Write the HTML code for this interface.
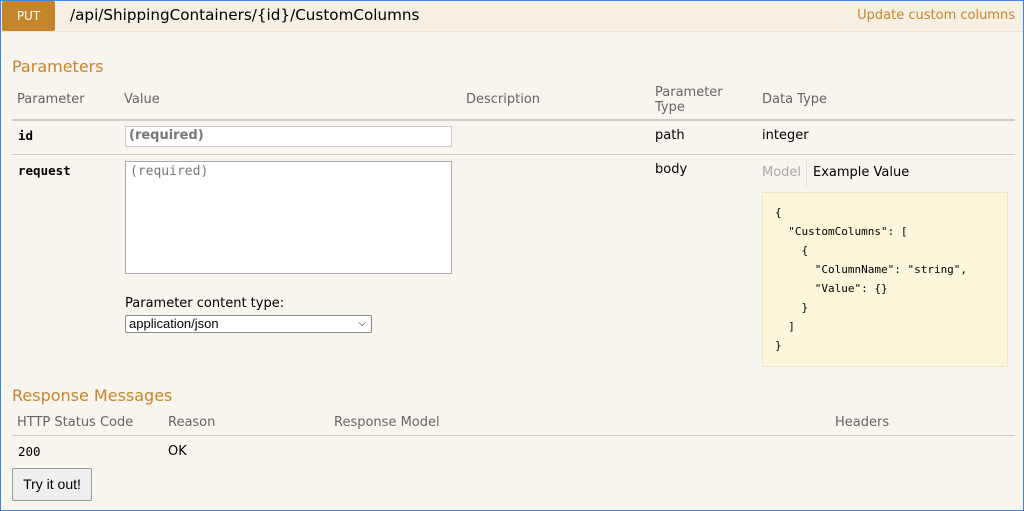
<!DOCTYPE html>
<html><head><style>
body{margin:0;width:1024px;height:511px;overflow:hidden;background:#fff;font-family:"DejaVu Sans","Liberation Sans",sans-serif;}
#f{position:absolute;left:0;top:0;width:1024px;height:511px;background:#f8f4ee;}
#b{position:absolute;left:0;top:0;width:1022px;height:509px;border:1px solid #3b86e0;z-index:9}
.a{position:absolute;white-space:nowrap;}
.hd{font-size:13px;color:#666;}
.mono{font-family:"DejaVu Sans Mono","Liberation Mono",monospace;}
.line{position:absolute;height:1px;background:#ccc;}
.h{color:#c5862b;font-size:16px;}
</style></head><body><div id="f">
<div id="b"></div>
<div class="a" style="left:0;top:0;width:1024px;height:31px;background:#f5efe4;border-bottom:1px solid #ece3d2"></div>
<div class="a" style="left:2px;top:1px;width:53px;height:30px;background:#c5862b;color:#fff;font-size:12px;line-height:30px;text-align:center;border-radius:2px">PUT</div>
<div class="a" style="left:70px;top:6px;font-size:15.2px;color:#000">/api/ShippingContainers/{id}/CustomColumns</div>
<div class="a" style="right:9px;top:8px;font-size:13px;color:#c5862b">Update custom columns</div>

<div class="a h" style="left:12px;top:57px">Parameters</div>
<div class="a hd" style="left:17px;top:92px">Parameter</div>
<div class="a hd" style="left:124px;top:92px">Value</div>
<div class="a hd" style="left:466px;top:92px">Description</div>
<div class="a hd" style="left:655px;top:85px;line-height:15px">Parameter<br>Type</div>
<div class="a hd" style="left:762px;top:92px">Data Type</div>
<div class="line" style="left:12px;top:119px;width:1003px;height:2px"></div>

<div class="a mono" style="left:18px;top:128px;font-size:12.5px;font-weight:bold">id</div>
<div class="a" style="left:125px;top:126px;width:325px;height:19px;background:#fff;border:1px solid #ccc;"></div>
<div class="a" style="left:129px;top:128px;font-size:13px;color:#777;font-weight:bold">(required)</div>
<div class="a" style="left:655px;top:128px;font-size:13px">path</div>
<div class="a" style="left:762px;top:128px;font-size:13px">integer</div>
<div class="line" style="left:12px;top:154px;width:1003px"></div>

<div class="a mono" style="left:18px;top:163px;font-size:12.5px;font-weight:bold">request</div>
<div class="a" style="left:125px;top:161px;width:325px;height:111px;background:#fff;border:1px solid #aaa;"></div>
<div class="a mono" style="left:130px;top:164px;font-size:13px;color:#777">(required)</div>
<div class="a" style="left:655px;top:162px;font-size:13px">body</div>
<div class="a" style="left:762px;top:165px;font-size:13px;color:#aaa">Model</div>
<div class="a" style="left:806px;top:161px;width:1px;height:25px;background:#ddd"></div>
<div class="a" style="left:813px;top:165px;font-size:13px">Example Value</div>
<div class="a mono" style="left:762px;top:192px;width:244px;height:173px;background:#fcf6db;border:1px solid #efe6c6;font-size:11px;line-height:19px;padding:0;">
<pre style="margin:0;position:absolute;left:12px;top:10px;font:inherit">{
  "CustomColumns": [
    {
      "ColumnName": "string",
      "Value": {}
    }
  ]
}</pre></div>

<div class="a" style="left:125px;top:296px;font-size:13px">Parameter content type:</div>
<div class="a" style="left:125px;top:315px;background:#fff;border:1px solid #888;border-radius:2px;font-family:'Liberation Sans',sans-serif;font-size:13px;line-height:16px;padding-left:3px;box-sizing:border-box;width:247px;height:18px">application/json<span style="position:absolute;right:5px;top:0;font-size:10px">&#9013;</span></div>

<div class="a h" style="left:12px;top:386px">Response Messages</div>
<div class="a hd" style="left:17px;top:415px">HTTP Status Code</div>
<div class="a hd" style="left:168px;top:415px">Reason</div>
<div class="a hd" style="left:334px;top:415px">Response Model</div>
<div class="a hd" style="left:835px;top:415px">Headers</div>
<div class="line" style="left:12px;top:435px;width:1003px"></div>
<div class="a mono" style="left:18px;top:444px;font-size:12.5px">200</div>
<div class="a" style="left:168px;top:444px;font-size:13px">OK</div>
<div class="a" style="left:12px;top:468px;width:80px;height:33px;background:#efefef;border:1px solid #999;border-radius:2px;font-family:'Liberation Sans',sans-serif;font-size:14px;line-height:31px;text-align:center;box-sizing:border-box;">Try it out!</div>
</div></body></html>
